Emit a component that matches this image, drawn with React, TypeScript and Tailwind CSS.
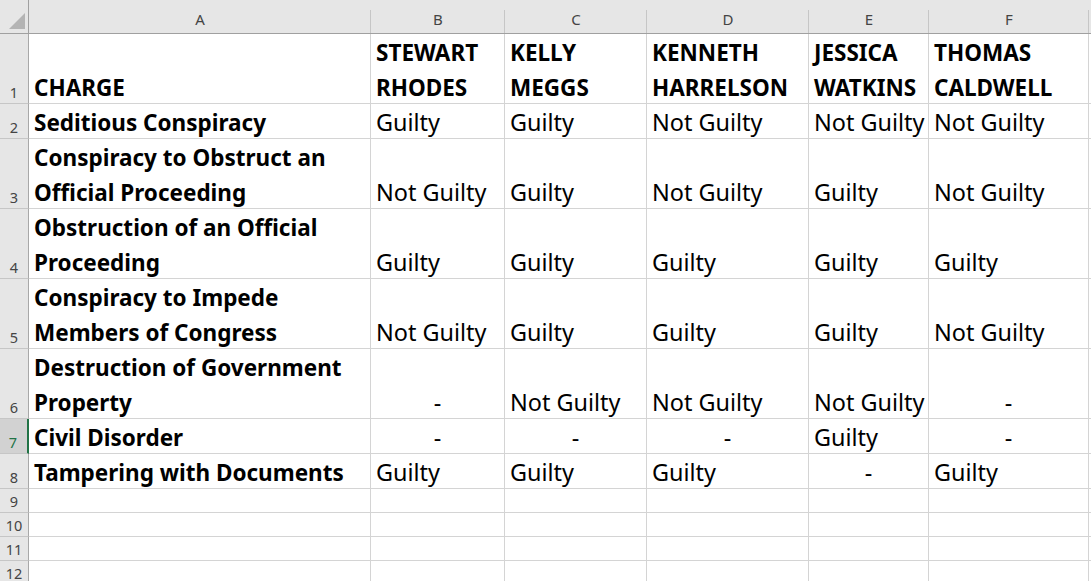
const COLS = ["A", "B", "C", "D", "E", "F", ""];

type Row = {
  n: number;
  cells?: string[][];
  bold?: boolean;
  selected?: boolean;
};

const ROWS: Row[] = [
  {
    n: 1,
    bold: true,
    cells: [
      ["CHARGE"],
      ["STEWART", "RHODES"],
      ["KELLY", "MEGGS"],
      ["KENNETH", "HARRELSON"],
      ["JESSICA", "WATKINS"],
      ["THOMAS", "CALDWELL"],
    ],
  },
  {
    n: 2,
    cells: [["Seditious Conspiracy"], ["Guilty"], ["Guilty"], ["Not Guilty"], ["Not Guilty"], ["Not Guilty"]],
  },
  {
    n: 3,
    cells: [
      ["Conspiracy to Obstruct an", "Official Proceeding"],
      ["Not Guilty"],
      ["Guilty"],
      ["Not Guilty"],
      ["Guilty"],
      ["Not Guilty"],
    ],
  },
  {
    n: 4,
    cells: [["Obstruction of an Official", "Proceeding"], ["Guilty"], ["Guilty"], ["Guilty"], ["Guilty"], ["Guilty"]],
  },
  {
    n: 5,
    cells: [
      ["Conspiracy to Impede", "Members of Congress"],
      ["Not Guilty"],
      ["Guilty"],
      ["Guilty"],
      ["Guilty"],
      ["Not Guilty"],
    ],
  },
  {
    n: 6,
    cells: [["Destruction of Government", "Property"], ["-"], ["Not Guilty"], ["Not Guilty"], ["Not Guilty"], ["-"]],
  },
  {
    n: 7,
    selected: true,
    cells: [["Civil Disorder"], ["-"], ["-"], ["-"], ["Guilty"], ["-"]],
  },
  {
    n: 8,
    cells: [["Tampering with Documents"], ["Guilty"], ["Guilty"], ["Guilty"], ["-"], ["Guilty"]],
  },
  { n: 9 },
  { n: 10 },
  { n: 11 },
  { n: 12 },
];

const Cell = ({ lines, bold }: { lines?: string[]; bold?: boolean }) => {
  const dash = lines && lines.length === 1 && lines[0] === "-";
  return (
    <div
      className={[
        "flex min-h-0 flex-col justify-end border-r border-b border-[#d4d4d4] leading-[35px] whitespace-nowrap text-black",
        dash ? "items-center" : "items-start pl-[5px]",
        bold ? "text-[22.5px] font-bold" : "text-[23.4px]",
      ].join(" ")}
    >
      {lines?.map((l, i) => (
        <span key={i} className="relative top-[2px]">
          {l}
        </span>
      ))}
    </div>
  );
};

export default function App() {
  return (
    <div className="h-[581px] w-[1091px] overflow-hidden bg-white" style={{ fontFamily: '"Noto Sans", "Open Sans", sans-serif' }}>
      <div className="grid grid-cols-[29px_342px_134px_142px_162px_120px_160px_1fr] grid-rows-[34px_70px_35px_70px_70px_70px_70px_35px_35px_24px_24px_24px_24px]">
        {/* corner */}
        <div className="flex items-end justify-end border-r border-b border-[#a0a0a0] bg-[#e6e6e6] pr-[3px] pb-[4px]">
          <svg width="16" height="16" viewBox="0 0 16 16">
            <polygon points="16,0 16,16 0,16" fill="#b4b4b4" />
          </svg>
        </div>
        {COLS.map((c, i) => (
          <div
            key={i}
            className="relative flex items-end justify-center border-b border-[#a0a0a0] bg-[#e6e6e6] pb-[3px] text-[15px] text-[#444] after:absolute after:top-[10px] after:right-0 after:bottom-0 after:w-px after:bg-[#c6c6c6]"
          >
            {c}
          </div>
        ))}

        {ROWS.map((r) => (
          <div key={r.n} className="contents">
            <div
              className={[
                "flex items-end justify-center border-b pb-[1px] text-[14.5px] leading-[20px]",
                r.selected
                  ? "border-r-2 border-r-[#217346] border-b-[#c6c6c6] bg-[#d2d2d2] pr-[1px] text-[#217346]"
                  : "border-r border-r-[#a8a8a8] border-b-[#c6c6c6] bg-[#e6e6e6] text-[#444]",
              ].join(" ")}
            >
              {r.n}
            </div>
            {COLS.map((_, i) => (
              <Cell key={i} lines={r.cells?.[i]} bold={r.bold || (i === 0 && !!r.cells)} />
            ))}
          </div>
        ))}
      </div>
    </div>
  );
}
